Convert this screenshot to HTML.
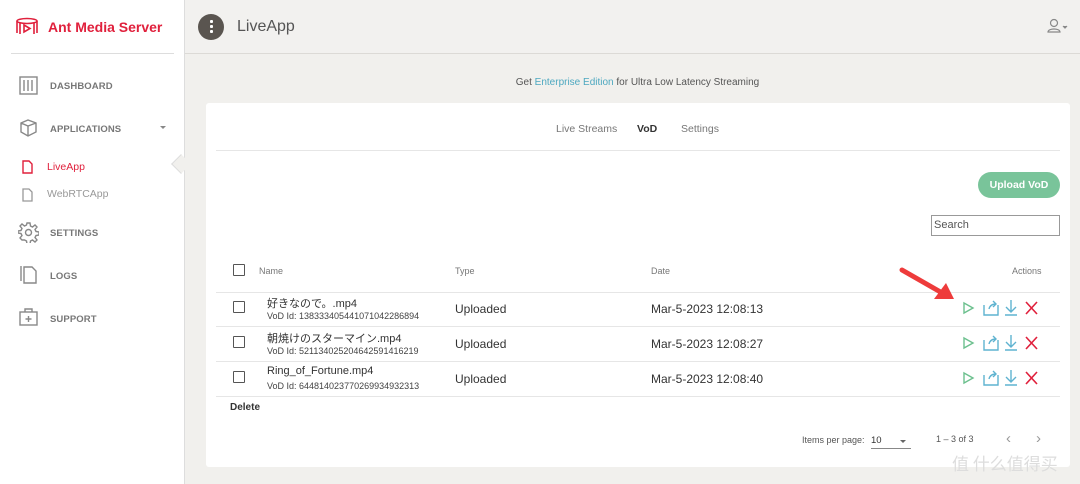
<!DOCTYPE html>
<html><head><meta charset="utf-8"><style>
*{box-sizing:border-box;margin:0;padding:0}
body{width:1080px;height:484px;overflow:hidden;background:#f1f0ed;font-family:"Liberation Sans","Noto Sans CJK JP",sans-serif;position:relative;color:#333}
.side{position:absolute;left:0;top:0;width:185px;height:484px;background:#fff;border-right:1px solid #ddd}
.abs{position:absolute;white-space:nowrap}
.nav{font-size:9.5px;color:#777;font-weight:bold;letter-spacing:0.1px}
.hdr{position:absolute;left:185px;top:0;right:0;height:54px;background:#f2f1ef;border-bottom:1px solid #dcdad6}
.card{position:absolute;left:206px;top:103px;width:864px;height:364px;background:#fff;border-radius:3px}
.cb{position:absolute;width:12px;height:12px;border:1.5px solid #555;border-radius:1px}
.line{position:absolute;left:10px;right:10px;height:1px;background:#e6e6e6}
.t{position:absolute;font-size:12px;color:#333;white-space:nowrap}
.s{position:absolute;font-size:9px;color:#444;white-space:nowrap}
</style></head><body>
<div class="side">
  <svg class="abs" style="left:15px;top:17px" width="24" height="20" viewBox="0 0 24 20" fill="none" stroke="#e0203c" stroke-width="1.6"><ellipse cx="12" cy="4" rx="10" ry="2.5"/><path d="M2 4v12M22 4v12M5 6v11M19 6v11"/><path d="M9 8l6 3.5-6 3.5z"/></svg>
  <div class="abs" style="left:48px;top:19px;font-size:14px;color:#e0203c;font-weight:bold">Ant Media Server</div>
  <div class="abs" style="left:11px;top:53px;width:163px;height:1px;background:#ddd"></div>
  <svg class="abs" style="left:19px;top:76px" width="19" height="19" viewBox="0 0 19 19" fill="none" stroke="#888" stroke-width="1.4"><rect x="1" y="1" width="17" height="17"/><path d="M5 4v11M9 4v11M13 4v11"/></svg>
  <div class="abs nav" style="left:50px;top:81px">DASHBOARD</div>
  <svg class="abs" style="left:19px;top:118px" width="19" height="19" viewBox="0 0 19 19" fill="none" stroke="#888" stroke-width="1.4"><path d="M2 5l7-3 8 3v9l-8 4-7-4z M2 5l7 3 8-3 M9 8v10"/></svg>
  <div class="abs nav" style="left:50px;top:124px">APPLICATIONS</div>
  <div class="abs" style="left:160px;top:126px;border-left:3px solid transparent;border-right:3px solid transparent;border-top:3px solid #888"></div>
  <svg class="abs" style="left:22px;top:160px" width="11" height="14" viewBox="0 0 11 14" fill="none" stroke="#e0203c" stroke-width="1.4"><path d="M1 1h6l3 3v9H1z"/></svg>
  <div class="abs" style="left:47px;top:161px;font-size:10.5px;color:#e0203c">LiveApp</div>
  <svg class="abs" style="left:22px;top:188px" width="11" height="14" viewBox="0 0 11 14" fill="none" stroke="#999" stroke-width="1.3"><path d="M1 1h6l3 3v9H1z"/></svg>
  <div class="abs" style="left:47px;top:188px;font-size:10.5px;color:#999">WebRTCApp</div>
  <svg class="abs" style="left:18px;top:222px" width="21" height="21" viewBox="0 0 21 21" fill="none" stroke="#888" stroke-width="1.4"><circle cx="10.5" cy="10.5" r="3"/><path d="M9 1h3l.5 3 2 1 2.5-2 2 2-2 2.5 1 2 3 .5v3l-3 .5-1 2 2 2.5-2 2-2.5-2-2 1-.5 3H9l-.5-3-2-1L4 18l-2-2 2-2.5-1-2L0 11V9l3-.5 1-2L2 4l2-2 2.5 2 2-1z"/></svg>
  <div class="abs nav" style="left:50px;top:228px">SETTINGS</div>
  <svg class="abs" style="left:20px;top:264px" width="17" height="20" viewBox="0 0 17 20" fill="none" stroke="#888" stroke-width="1.4"><path d="M4 3h8l4 4v12H4z M1 2v15"/></svg>
  <div class="abs nav" style="left:50px;top:271px">LOGS</div>
  <svg class="abs" style="left:19px;top:308px" width="19" height="18" viewBox="0 0 19 18" fill="none" stroke="#888" stroke-width="1.4"><rect x="1" y="4" width="17" height="13"/><path d="M6 4V1h7v3M9.5 8v6M6.5 11h6"/></svg>
  <div class="abs nav" style="left:50px;top:314px">SUPPORT</div>
</div>
<div class="abs" style="left:174px;top:157px;width:14px;height:14px;background:#f1f0ed;transform:rotate(45deg);border-left:1px solid #ddd;border-bottom:1px solid #ddd"></div>
<div class="hdr">
  <div class="abs" style="left:13px;top:14px;width:26px;height:26px;border-radius:50%;background:#5a5550"></div>
  <div class="abs" style="left:24.5px;top:20px;width:3px;height:3px;background:#fff;border-radius:1px;box-shadow:0 5px 0 #fff,0 10px 0 #fff"></div>
  <div class="abs" style="left:52px;top:18px;font-size:16px;color:#555">LiveApp</div>
  <svg class="abs" style="left:862px;top:18px" width="22" height="16" viewBox="0 0 22 16" fill="none" stroke="#888" stroke-width="1.2"><circle cx="7" cy="5" r="3.5"/><path d="M1 14c0-4 12-4 12 0z"/><path d="M16 8l2 2 2-2" fill="#888"/></svg>
</div>
<div class="abs" style="left:0;width:1275px;top:77px;text-align:center;font-size:10px;color:#555">Get <span style="color:#4da8c0">Enterprise Edition</span> for Ultra Low Latency Streaming</div>
<div class="card">
  <div class="abs" style="left:350px;top:20px;font-size:10.5px;color:#777">Live Streams</div>
  <div class="abs" style="left:431px;top:20px;font-size:10.5px;color:#333;font-weight:bold">VoD</div>
  <div class="abs" style="left:475px;top:20px;font-size:10.5px;color:#777">Settings</div>
  <div class="line" style="top:47px"></div>
  <div class="abs" style="left:772px;top:69px;width:82px;height:26px;border-radius:13px;background:#79c49a;color:#fff;font-size:10.5px;font-weight:bold;text-align:center;line-height:26px">Upload VoD</div>
  <div class="abs" style="left:725px;top:112px;width:129px;height:21px;border:1px solid #999;font-size:11px;color:#555;padding:3px 2px">Search</div>
  <div class="cb" style="left:27px;top:161px"></div>
  <div class="s" style="left:53px;top:163px;color:#777">Name</div>
  <div class="s" style="left:249px;top:163px;color:#777">Type</div>
  <div class="s" style="left:445px;top:163px;color:#777">Date</div>
  <div class="s" style="left:806px;top:163px;color:#777">Actions</div>
  <div class="line" style="top:189px"></div>
  <div class="line" style="top:223px"></div>
  <div class="line" style="top:258px"></div>
  <div class="line" style="top:293px"></div>
  <div class="abs" style="left:24px;top:299px;font-size:10px;color:#333;font-weight:bold">Delete</div>
  <div class="abs" style="left:596px;top:332px;font-size:9px;color:#555">Items per page:</div>
  <div class="abs" style="left:665px;top:332px;font-size:9.5px;color:#333;width:40px;border-bottom:1px solid #888;height:14px">10</div>
  <div class="abs" style="left:694px;top:337px;border-left:3.5px solid transparent;border-right:3.5px solid transparent;border-top:3.5px solid #666"></div>
  <div class="abs" style="left:730px;top:331px;font-size:9px;color:#555">1 – 3 of 3</div>
  <div class="abs" style="left:800px;top:327px;font-size:15px;color:#999">‹</div>
  <div class="abs" style="left:830px;top:327px;font-size:15px;color:#999">›</div>
</div>
<div style="position:absolute;left:206px;top:103px;width:864px;height:300px">
  <div class="cb" style="left:27px;top:198px"></div>
  <div class="t" style="left:61px;top:192px;font-size:11px">好きなので。.mp4</div>
  <div class="s" style="left:61px;top:208px">VoD Id: 138333405441071042286894</div>
  <div class="t" style="left:249px;top:199px">Uploaded</div>
  <div class="t" style="left:445px;top:199px">Mar-5-2023 12:08:13</div>
  <div class="cb" style="left:27px;top:233px"></div>
  <div class="t" style="left:61px;top:227px;font-size:11px">朝焼けのスターマイン.mp4</div>
  <div class="s" style="left:61px;top:243px">VoD Id: 521134025204642591416219</div>
  <div class="t" style="left:249px;top:234px">Uploaded</div>
  <div class="t" style="left:445px;top:234px">Mar-5-2023 12:08:27</div>
  <div class="cb" style="left:27px;top:268px"></div>
  <div class="t" style="left:61px;top:262px;font-size:11px">Ring_of_Fortune.mp4</div>
  <div class="s" style="left:61px;top:278px">VoD Id: 644814023770269934932313</div>
  <div class="t" style="left:249px;top:269px">Uploaded</div>
  <div class="t" style="left:445px;top:269px">Mar-5-2023 12:08:40</div>
</div>
<svg class="abs" style="left:955px;top:298px" width="90" height="94" viewBox="0 0 90 94">
  <g id="ic" fill="none" stroke-width="1.4">
    <path d="M9 5l9 5-9 5z" stroke="#6cc08e"/>
    <path d="M29 7v10h14V7 M34 11c1-4 4-5 7-5 M38 3l3 3-3 3" stroke="#5fb3d0"/>
    <path d="M56 2v12 M51 9l5 5 5-5 M50 17h12" stroke="#5fb3d0"/>
    <path d="M71 4l11 12 M82 4L71 16" stroke="#e0203c" stroke-width="1.6"/>
  </g>
  <use href="#ic" y="35"/><use href="#ic" y="70"/>
</svg>
<svg class="abs" style="left:898px;top:266px" width="60" height="36" viewBox="0 0 60 36"><path d="M4 4L46 28" stroke="#ee3b3b" stroke-width="5" stroke-linecap="round"/><path d="M56 33L36 33 48 17z" fill="#ee3b3b"/></svg>
<div class="abs" style="left:952px;top:450px;font-size:17px;color:#ddd;font-family:'Noto Sans CJK SC',sans-serif">值 什么值得买</div>
</body></html>
